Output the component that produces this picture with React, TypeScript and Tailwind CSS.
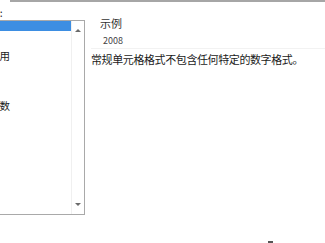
const categories = [
  "常规",
  "数值",
  "货币",
  "会计专用",
  "日期",
  "时间",
  "百分比",
  "分数",
  "科学记数",
  "文本",
  "特殊",
  "自定义",
];

const font = "font-['Noto_Sans_CJK_SC','Liberation_Sans',sans-serif]";

export default function App() {
  return (
    <div className={`flex h-[243px] w-[325px] flex-col overflow-hidden bg-white text-[#1a1a1a] ${font}`}>
      {/* edge of the control above */}
      <div className="ml-[10px] h-[2px] shrink-0 bg-[#a6a6a6]" />

      <div className="flex flex-1">
        {/* category list, scrolled partly out of view */}
        <div className="ml-[-36px] flex w-[121px] shrink-0 flex-col">
          <div className="mt-[5px] h-[12px] whitespace-nowrap pl-[1px] text-[10.5px] leading-[12px]">
            分类(C):
          </div>
          <div className="mt-[1px] flex h-[195px] border border-[#a9a9a9] bg-white">
            <div className="flex-1 overflow-hidden">
              {categories.map((c, i) => (
                <div
                  key={c}
                  className={`h-[10px] whitespace-nowrap pl-[3px] text-[10.5px] leading-[10px] ${
                    i === 0 ? "bg-[#3d8ee2] text-white" : ""
                  }`}
                >
                  {c}
                </div>
              ))}
            </div>
            <div className="flex w-[13px] flex-col items-center justify-between border-l border-[#f0f0f0] py-[5px]">
              <svg width="6" height="4" viewBox="0 0 6 4" className="mt-[2px]">
                <path d="M0 4 L3 1 L6 4 Z" fill="#6b6b6b" />
              </svg>
              <svg width="6" height="4" viewBox="0 0 6 4" className="mb-[2px]">
                <path d="M0 0 L3 3 L6 0 Z" fill="#6b6b6b" />
              </svg>
            </div>
          </div>
        </div>

        {/* sample + description */}
        <div className="ml-[6px] flex flex-1 flex-col">
          <div className="mt-[15px] pl-[9px] text-[11px] leading-[13px] text-[#333]">示例</div>
          <div className="mt-[6px] border-b border-[#f2f2f2] pb-[2px] pl-[12px] text-[9px] leading-[10px] text-[#444]">
            2008
          </div>
          <div className="mt-[4px] whitespace-nowrap text-[11px] leading-[12px] tracking-[-0.4px]">
            常规单元格格式不包含任何特定的数字格式。
          </div>
          <div className="mt-auto ml-[177px] h-[2px] w-[5px] bg-[#555]" />
        </div>
      </div>
    </div>
  );
}
